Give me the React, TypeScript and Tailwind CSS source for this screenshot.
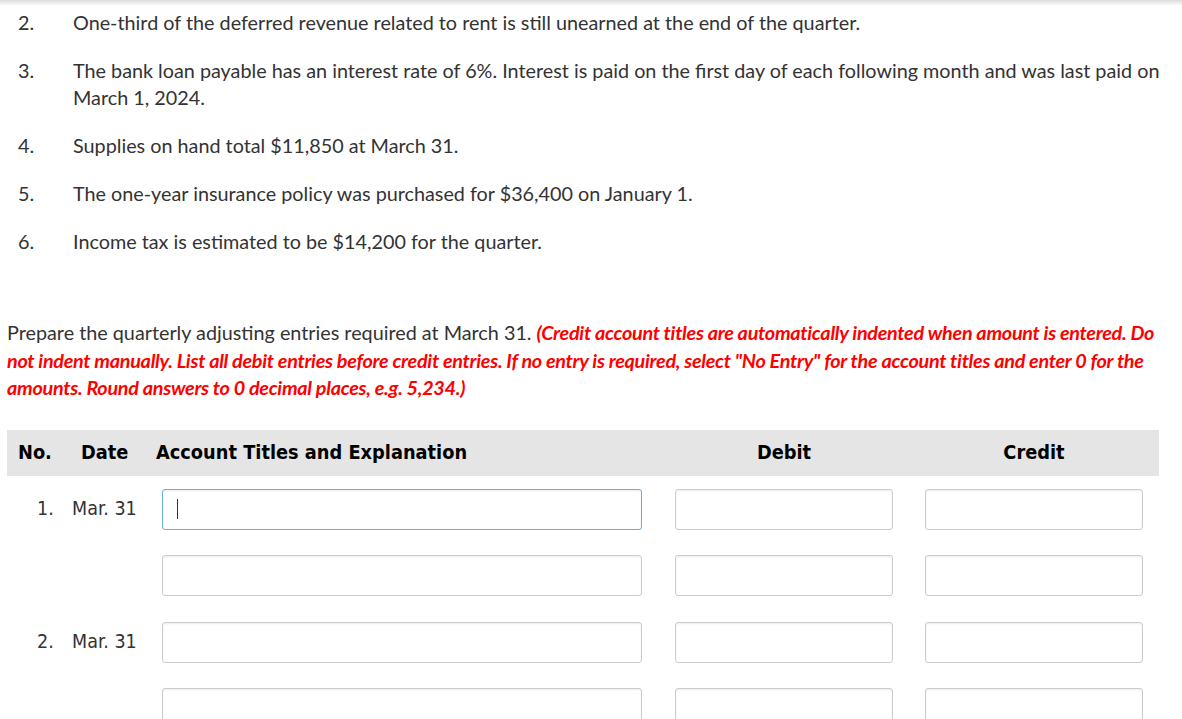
import React from "react";

const items = [
  { n: "2.", text: "One-third of the deferred revenue related to rent is still unearned at the end of the quarter." },
  {
    n: "3.",
    text: "The bank loan payable has an interest rate of 6%. Interest is paid on the first day of each following month and was last paid on March 1, 2024.",
  },
  { n: "4.", text: "Supplies on hand total $11,850 at March 31." },
  { n: "5.", text: "The one-year insurance policy was purchased for $36,400 on January 1." },
  { n: "6.", text: "Income tax is estimated to be $14,200 for the quarter." },
];

const rows = [
  { no: "1.", date: "Mar. 31", focused: true },
  { no: "", date: "", focused: false },
  { no: "2.", date: "Mar. 31", focused: false },
  { no: "", date: "", focused: false },
];

const inputBase = "h-[41px] rounded-[3px] border bg-white shadow-[inset_0_1px_2px_rgba(0,0,0,0.08)]";

const App: React.FC = () => {
  return (
    <div className="relative h-[719px] w-[1182px] overflow-hidden bg-white font-['Lato','Open_Sans',sans-serif] text-[#333]">
      {/* top shadow */}
      <div className="pointer-events-none absolute left-0 right-0 top-0 h-[6px] bg-gradient-to-b from-[#dcdcdc] to-white" />

      <ol className="pt-[9px]">
        {items.map((it) => (
          <li key={it.n} className="mb-[21px] flex text-[19.8px] leading-[27px]">
            <span className="w-[73px] shrink-0 pl-[18px]">{it.n}</span>
            <span className="pr-[20px]">{it.text}</span>
          </li>
        ))}
      </ol>

      <p className="mt-[64px] px-[7px] text-[19.8px] leading-[27.5px]">
        Prepare the quarterly adjusting entries required at March 31.{" "}
        <span className="font-bold italic tracking-[-0.28px] text-[#ff0000]">
          (Credit account titles are automatically indented when amount is entered. Do not indent manually. List all
          debit entries before credit entries. If no entry is required, select "No Entry" for the account titles and
          enter 0 for the amounts. Round answers to 0 decimal places, e.g. 5,234.)
        </span>
      </p>

      <div className="ml-[7px] mt-[28px] w-[1152px] font-['DejaVu_Sans_Condensed','Liberation_Sans',sans-serif]">
        <div className="flex h-[46px] items-center bg-[#e5e5e5] text-[19.8px] font-bold text-black">
          <span className="w-[74px] pl-[11px]">No.</span>
          <span className="w-[75px]">Date</span>
          <span className="w-[519px]">Account Titles and Explanation</span>
          <span className="w-[218px] text-center">Debit</span>
          <span className="ml-[32px] w-[218px] text-center">Credit</span>
        </div>

        <div className="mt-[13px] flex flex-col gap-[25.5px]">
          {rows.map((r, i) => (
            <div key={i} className="flex items-center text-[19.5px] text-[#333]">
              <span className="w-[65px] pl-[30px]">{r.no}</span>
              <span className="w-[90px]">{r.date}</span>
              <div
                className={`${inputBase} flex w-[480px] items-center pl-[14px] ${
                  r.focused
                    ? "border-[#66afe9] shadow-[0_0_6px_rgba(102,175,233,0.6)]"
                    : "border-[#cccccc]"
                }`}
              >
                {r.focused && <span className="h-[20px] w-px bg-[#333]" />}
              </div>
              <div className={`${inputBase} ml-[33px] w-[218px] border-[#cccccc]`} />
              <div className={`${inputBase} ml-[32px] w-[218px] border-[#cccccc]`} />
            </div>
          ))}
        </div>
      </div>
    </div>
  );
};

export default App;
